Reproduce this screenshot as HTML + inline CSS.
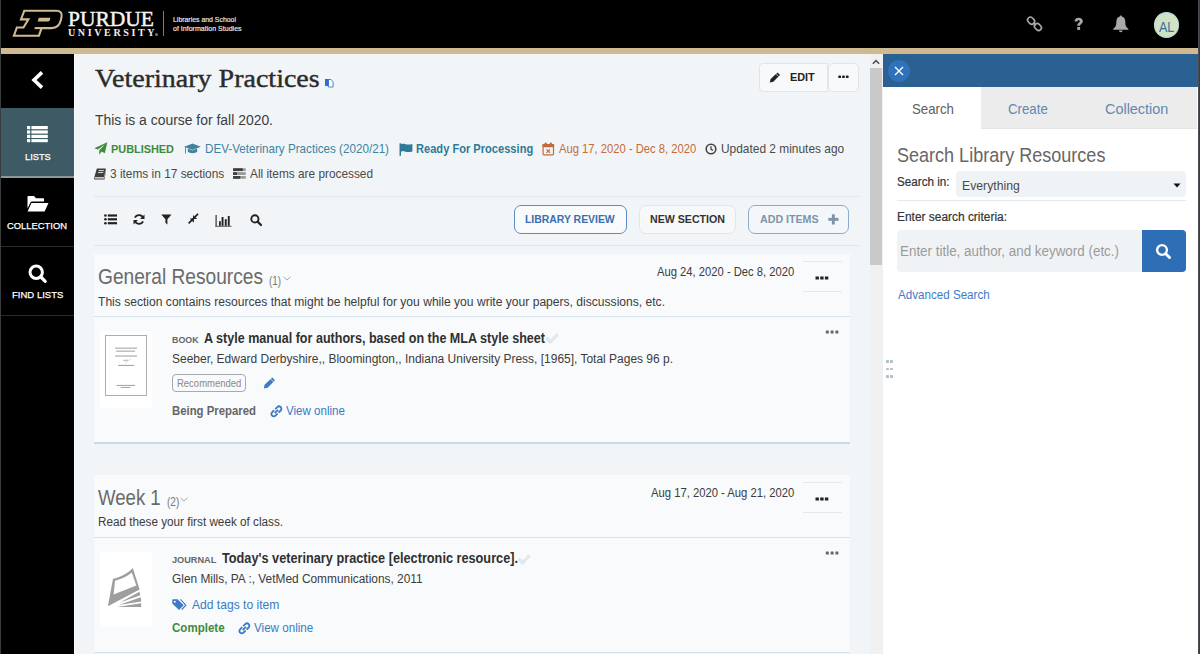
<!DOCTYPE html>
<html><head><meta charset="utf-8"><title>Veterinary Practices</title>
<style>
html,body{margin:0;padding:0;width:1200px;height:654px;overflow:hidden;background:#000;}
body{position:relative;font-family:'Liberation Sans', sans-serif;}
.t{position:absolute;white-space:nowrap;line-height:1;transform-origin:0 0;}
.r{position:absolute;box-sizing:border-box;}
svg{position:absolute;overflow:visible;}
</style></head><body>
<!-- header -->
<div class="r" style="left:0;top:0;width:1200px;height:48px;background:#000"></div>
<div class="r" style="left:0;top:48px;width:1200px;height:6px;background:#cfb991"></div>
<!-- P logo -->
<svg style="left:0;top:0" width="80" height="48" viewBox="0 0 80 48">
  <path d="M24.3,10.7 L56.3,10.7 C60.6,10.7 62.3,13.3 61.5,17 L60.8,20.3 C59.6,25.6 56.5,28.1 51.5,28.1 L41.6,28.1 L38.9,35.7 L13.9,35.7 L16.9,27.5 L23.5,27.5 L28.4,19.4 L21,19.4 Z" fill="#000" stroke="#cfb991" stroke-width="2.1" stroke-linejoin="miter"/>
  <path d="M34.6,28.1 L42,28.1" stroke="#cfb991" stroke-width="2.1"/>
  <path d="M38.9,17.7 L49.2,17.7 C50.2,17.7 50.4,18.4 50.2,19.1 C49.9,20.7 49.2,21.5 48,21.5 L37.6,21.5 Z" fill="#cfb991"/>
</svg>
<!-- registered mark -->
<div class="r" style="left:155px;top:33px;width:3px;height:3px;border-radius:50%;background:#777"></div>
<div class="r" style="left:163.2px;top:10.5px;width:1px;height:25.4px;background:#7a7a7a"></div>
<!-- header icons -->
<svg style="left:1026px;top:15px" width="18" height="18" viewBox="0 0 18 18">
  <g fill="none" stroke="#a9a9a9" stroke-width="1.6">
    <rect x="2.3" y="1.9" width="5.6" height="7.6" rx="2.8" transform="rotate(-45 5.1 5.7)"/>
    <rect x="9.1" y="8.2" width="5.6" height="7.6" rx="2.8" transform="rotate(-45 11.9 12)"/>
  </g>
  <line x1="7" y1="7.6" x2="10" y2="10.2" stroke="#a9a9a9" stroke-width="1.4"/>
</svg>
<svg style="left:1073px;top:17px" width="12" height="14" viewBox="0 0 12 14">
  <path d="M1.6,4.4 C1.6,1.9 3.6,0.8 5.6,0.8 C7.9,0.8 9.8,2.1 9.8,4.2 C9.8,6.6 7.1,6.9 7.1,8.8 L4.2,8.8 C4.2,5.9 6.8,5.8 6.8,4.3 C6.8,3.6 6.3,3.2 5.6,3.2 C4.9,3.2 4.4,3.7 4.4,4.5 Z" fill="#a9a9a9"/>
  <rect x="4.2" y="10" width="2.9" height="2.9" fill="#a9a9a9"/>
</svg>
<svg style="left:1112px;top:15px" width="18" height="18" viewBox="0 0 18 18">
  <path d="M8.8,0.6 C9.5,0.6 9.8,1.2 9.8,1.6 C12.5,2.1 13.3,4.5 13.3,7.2 C13.3,10.5 14,12 16.4,13.9 L16.4,14.8 L1.2,14.8 L1.2,13.9 C3.6,12 4.3,10.5 4.3,7.2 C4.3,4.5 5.1,2.1 7.8,1.6 C7.8,1.2 8.1,0.6 8.8,0.6 Z M7,15.5 L10.6,15.5 C10.6,16.6 9.8,17.2 8.8,17.2 C7.8,17.2 7,16.6 7,15.5 Z" fill="#a9a9a9"/>
</svg>
<div class="r" style="left:1153.6px;top:11.7px;width:25.8px;height:26px;border-radius:50%;background:#d0e1c4;border:1px solid #b5dcd6"></div>

<!-- sidebar -->
<div class="r" style="left:0;top:54px;width:74px;height:600px;background:#000"></div>
<svg style="left:29px;top:70px" width="16" height="20" viewBox="0 0 16 20">
  <path d="M13,2.4 L5,10 L13,17.6" fill="none" stroke="#fff" stroke-width="3.6" stroke-linecap="butt" stroke-linejoin="miter"/>
</svg>
<div class="r" style="left:1px;top:108px;width:73px;height:68px;background:#3d5a65"></div>
<div class="r" style="left:1px;top:176px;width:73px;height:2px;background:linear-gradient(#87959a,#9a9a9a)"></div>
<svg style="left:27px;top:126px" width="21" height="17" viewBox="0 0 21 17">
  <g fill="#fff">
    <rect x="0" y="0" width="3.2" height="3.2"/><rect x="4.4" y="0" width="16.4" height="3.2"/>
    <rect x="0" y="4.4" width="3.2" height="3.2"/><rect x="4.4" y="4.4" width="16.4" height="3.2"/>
    <rect x="0" y="8.8" width="3.2" height="3.2"/><rect x="4.4" y="8.8" width="16.4" height="3.2"/>
    <rect x="0" y="13.1" width="3.2" height="3.1"/><rect x="4.4" y="13.1" width="16.4" height="3.1"/>
  </g>
</svg>
<div class="r" style="left:1px;top:246px;width:73px;height:1px;background:#2b2b2b"></div>
<div class="r" style="left:1px;top:315px;width:73px;height:1px;background:#2b2b2b"></div>
<svg style="left:26.5px;top:195.5px" width="22" height="16" viewBox="0 0 22 16">
  <path d="M0.5,1 C0.5,0.4 0.9,0 1.5,0 L7,0 L9,2.2 L16,2.2 C16.6,2.2 17,2.6 17,3.2 L17,5.5 L5,5.5 C4.2,5.5 3.7,5.9 3.4,6.5 L0.5,12.5 Z M4.4,7 L21.5,7 L17.6,15.5 L0.6,15.5 Z" fill="#fff"/>
</svg>
<svg style="left:28px;top:265px" width="20" height="20" viewBox="0 0 20 20">
  <circle cx="8.2" cy="7.3" r="6.2" fill="none" stroke="#fff" stroke-width="3"/>
  <path d="M12.9,12 L17.2,16.3" stroke="#fff" stroke-width="3.2" stroke-linecap="round"/>
</svg>

<!-- left & right frame borders -->
<div class="r" style="left:0;top:0;width:1px;height:654px;background:#3a3c3f;z-index:5"></div>
<div class="r" style="left:1198px;top:0;width:2px;height:654px;background:linear-gradient(90deg,#55595f,#303237);z-index:5"></div>

<!-- main area -->
<div class="r" style="left:74px;top:54px;width:796px;height:600px;background:#f1f5f7"></div>
<div class="r" style="left:74px;top:54px;width:1px;height:600px;background:#f9fbfc"></div>
<!-- copy icon -->
<svg style="left:324px;top:78px" width="11" height="11" viewBox="0 0 11 11">
  <rect x="1.1" y="1" width="4.6" height="6.9" fill="#2c6fc4"/>
  <path d="M4.3,1.5 L7.1,1.5 L9.1,3.9 L9.1,9 L4.3,9 Z" fill="#fff" stroke="#4f87cf" stroke-width="1"/>
  <rect x="1.1" y="1" width="3.7" height="6.9" fill="#2c6fc4"/>
</svg>
<!-- edit buttons -->
<div class="r" style="left:759px;top:63.2px;width:69px;height:28.6px;border:1px solid #e1e5e8;border-radius:4px 0 0 4px;background:#f7f9fa"></div>
<div class="r" style="left:827.5px;top:63.2px;width:31px;height:28.6px;border:1px solid #e1e5e8;border-radius:5px;background:#f7f9fa"></div>
<svg style="left:768.5px;top:71.5px" width="12" height="11" viewBox="0 0 12 11">
  <path d="M8.6,0.6 L11,3 L4.3,9.7 L0.8,10.5 L1.6,7 Z" fill="#222"/>
  <path d="M7.2,2 L9.6,4.4" stroke="#f7f9fa" stroke-width="0.8"/>
</svg>
<svg style="left:837.5px;top:74.8px" width="11" height="4" viewBox="0 0 11 4">
  <rect x="0.3" y="0.4" width="2.7" height="2.7" rx="0.6" fill="#222"/><rect x="4.1" y="0.4" width="2.7" height="2.7" rx="0.6" fill="#222"/><rect x="7.9" y="0.4" width="2.7" height="2.7" rx="0.6" fill="#222"/>
</svg>

<!-- meta icons row 1 -->
<svg style="left:93.5px;top:142px" width="14" height="13" viewBox="0 0 14 13">
  <path d="M13.3,0.3 L0.3,6.3 L4,7.6 L11,2.2 L5.2,8.5 L5.2,12.7 L7.6,9.6 L10.8,11.2 Z" fill="#3f8a3b"/>
</svg>
<svg style="left:183.5px;top:143px" width="17" height="12" viewBox="0 0 17 12">
  <path d="M8.5,0.5 L16.8,3.7 L8.5,6.9 L0.2,3.7 Z" fill="#3e84a0"/>
  <path d="M3.8,5.6 L3.8,8.8 C5.3,10.6 11.7,10.6 13.2,8.8 L13.2,5.6 L8.5,7.4 Z" fill="#3e84a0"/>
  <rect x="1.1" y="4" width="0.9" height="6.5" fill="#3e84a0"/>
</svg>
<svg style="left:398.5px;top:142.5px" width="14" height="13" viewBox="0 0 14 13">
  <rect x="0.5" y="0.3" width="1.5" height="12.5" fill="#2f7a97"/>
  <path d="M2,1.3 C5,-0.3 7.5,2.8 13.4,1 L13.4,8.4 C7.5,10.2 5,7.1 2,8.7 Z" fill="#2f7a97"/>
</svg>
<svg style="left:541.5px;top:141.5px" width="13" height="14" viewBox="0 0 13 14">
  <rect x="1.1" y="2.6" width="10.4" height="10.3" rx="0.8" fill="none" stroke="#c46a3c" stroke-width="1.2"/>
  <rect x="0.5" y="2" width="11.6" height="3.2" rx="0.6" fill="#c46a3c"/>
  <rect x="2.6" y="0.4" width="2.2" height="3" rx="1" fill="#c46a3c"/><rect x="7.8" y="0.4" width="2.2" height="3" rx="1" fill="#c46a3c"/>
  <path d="M4.5,7.3 L8.1,10.9 M8.1,7.3 L4.5,10.9" stroke="#c46a3c" stroke-width="1.2"/>
</svg>
<svg style="left:704.5px;top:142.5px" width="12" height="12" viewBox="0 0 12 12">
  <circle cx="6" cy="6" r="4.8" fill="none" stroke="#444" stroke-width="1.6"/>
  <path d="M6,3.2 L6,6.3 L8,7.3" fill="none" stroke="#444" stroke-width="1.3"/>
</svg>
<!-- meta icons row 2 -->
<svg style="left:93.5px;top:167.5px" width="13" height="13" viewBox="0 0 13 13">
  <path d="M3.3,0.6 L11.4,0.6 C11.8,0.6 12,0.9 11.9,1.3 L9.9,9.3 L1.2,9.3 C0.8,9.3 0.6,9.6 0.6,10 C0.6,10.4 0.9,10.6 1.3,10.6 L10.1,10.6 L11.7,3.6 L11.9,3.8 L10.5,11.6 L1.2,11.6 C0.3,11.6 -0.2,11 0.1,10 L2.6,1.2 C2.7,0.8 2.9,0.6 3.3,0.6 Z" fill="#3d3d3d"/>
  <path d="M4.6,2.6 L9.8,2.6 M4.1,4.6 L9.3,4.6" stroke="#f1f5f7" stroke-width="0.9"/>
</svg>
<svg style="left:232.8px;top:167.8px" width="13" height="11" viewBox="0 0 13 11">
  <g fill="#9a9a9a"><rect x="0" y="0.3" width="12.8" height="2.9" rx="0.6"/><rect x="0" y="4.1" width="12.8" height="2.9" rx="0.6"/><rect x="0" y="7.9" width="12.8" height="2.9" rx="0.6"/></g>
  <g fill="#3f3f3f"><rect x="0" y="0.3" width="9.8" height="2.9" rx="0.5"/><rect x="0" y="4.1" width="4" height="2.9" rx="0.5"/><rect x="0" y="7.9" width="7.2" height="2.9" rx="0.5"/></g>
  <rect x="0" y="3.2" width="12.8" height="0.9" fill="#f1f5f7"/><rect x="0" y="7" width="12.8" height="0.9" fill="#f1f5f7"/>
</svg>

<!-- dividers -->
<div class="r" style="left:94px;top:196px;width:765px;height:1px;background:#dfe7eb"></div>
<div class="r" style="left:94px;top:245px;width:765px;height:1px;background:#dfe7eb"></div>

<!-- toolbar icons -->
<svg style="left:103.5px;top:213.5px" width="14" height="11" viewBox="0 0 14 11">
  <g fill="#222"><circle cx="1.4" cy="1.5" r="1.3"/><circle cx="1.4" cy="5.3" r="1.3"/><circle cx="1.4" cy="9.2" r="1.3"/>
  <rect x="3.8" y="0.4" width="9.2" height="2.2"/><rect x="3.8" y="4.2" width="9.2" height="2.2"/><rect x="3.8" y="8.1" width="9.2" height="2.2"/></g>
</svg>
<svg style="left:132.5px;top:213.5px" width="12" height="11" viewBox="0 0 12 11">
  <path d="M10.3,4.2 A4.6,4.6 0 0 0 1.9,3.6" fill="none" stroke="#222" stroke-width="1.9"/>
  <path d="M1.7,6.8 A4.6,4.6 0 0 0 10.1,7.4" fill="none" stroke="#222" stroke-width="1.9"/>
  <path d="M11.5,0.5 L11.5,5 L7,5 Z" fill="#222"/><path d="M0.5,10.5 L0.5,6 L5,6 Z" fill="#222"/>
</svg>
<svg style="left:160.5px;top:213.5px" width="11" height="11" viewBox="0 0 11 11">
  <path d="M0.3,0.5 L10.5,0.5 L6.4,5.2 L6.4,10.5 L4.4,8.7 L4.4,5.2 Z" fill="#222"/>
</svg>
<svg style="left:180px;top:208px" width="24" height="22" viewBox="0 0 24 22">
  <path d="M8.6,15.3 L18,5.9" stroke="#222" stroke-width="1.7"/>
  <path d="M13,11 L13,6.9 L17.1,11 Z M13.9,10.6 L13.9,14.8 L9.7,10.6 Z" fill="#222"/>
</svg>
<svg style="left:214px;top:213px" width="19" height="15" viewBox="0 0 19 15">
  <rect x="1.5" y="2" width="1.2" height="11.8" fill="#333"/>
  <rect x="1.5" y="12.8" width="16" height="1.1" fill="#666"/>
  <g fill="#222"><rect x="5" y="8.2" width="1.8" height="4.6"/><rect x="7.6" y="4" width="1.9" height="8.8"/><rect x="10.8" y="6.2" width="1.9" height="6.6"/><rect x="13.8" y="3" width="1.9" height="9.8"/></g>
</svg>
<svg style="left:249.5px;top:213.5px" width="12" height="12" viewBox="0 0 12 12">
  <circle cx="4.9" cy="4.9" r="3.6" fill="none" stroke="#222" stroke-width="1.9"/>
  <path d="M7.6,7.6 L11,11" stroke="#222" stroke-width="2.2" stroke-linecap="round"/>
</svg>
<!-- toolbar buttons -->
<div class="r" style="left:514px;top:204.7px;width:112.5px;height:29px;border:1px solid #5b8cc8;border-radius:7px;background:#f8fafc"></div>
<div class="r" style="left:638.8px;top:204.7px;width:97.7px;height:29px;border:1px solid #e2e6e9;border-radius:7px;background:#f6f8f9"></div>
<div class="r" style="left:748.2px;top:204.7px;width:101.2px;height:29px;border:1px solid #8eaad0;border-radius:7px;background:#f4f7fa"></div>
<svg style="left:828px;top:213.5px" width="11" height="11" viewBox="0 0 11 11">
  <rect x="3.9" y="0.3" width="2.9" height="10.2" fill="#7f93a8"/><rect x="0.3" y="3.9" width="10.2" height="2.9" fill="#7f93a8"/>
</svg>

<!-- section 1 card -->
<div class="r" style="left:94px;top:254.3px;width:756px;height:189.7px;background:#f8fafb;border-bottom:2px solid #c9dae0"></div>
<svg style="left:281.5px;top:275px" width="10" height="7" viewBox="0 0 10 7">
  <path d="M1.5,1.8 L5,5 L8.5,1.8" fill="none" stroke="#aaa" stroke-width="1"/>
</svg>
<div class="r" style="left:803.3px;top:261px;width:38.4px;height:31px;border-top:1px solid #e3e9ed;border-bottom:1px solid #e3e9ed"></div>
<svg style="left:814.5px;top:275.5px" width="14" height="4" viewBox="0 0 14 4">
  <g fill="#222"><rect x="0.5" y="0.5" width="3.4" height="3"/><rect x="5.2" y="0.5" width="3.4" height="3"/><rect x="9.9" y="0.5" width="3.4" height="3"/></g>
</svg>
<div class="r" style="left:94px;top:316px;width:756px;height:1px;background:#d6e2ec"></div>
<!-- thumb 1 -->
<div class="r" style="left:100px;top:330.7px;width:52px;height:77.3px;background:#fff"></div>
<div class="r" style="left:104.7px;top:335.3px;width:42.3px;height:60.4px;border:1px solid #adadad;background:#fff"></div>
<svg style="left:104.7px;top:335.3px" width="42" height="61" viewBox="0 0 42 61">
  <g fill="#a6a6a6">
    <rect x="10.1" y="12.6" width="22" height="1.1"/><rect x="11.1" y="15.6" width="19" height="1.1"/>
    <rect x="10.1" y="20.5" width="22" height="1.1"/><rect x="18.3" y="24.8" width="5" height="0.9"/>
    <rect x="13.2" y="29.9" width="15.8" height="1.1"/><rect x="11.6" y="49.9" width="18.4" height="1.1"/><rect x="15.7" y="52" width="9.7" height="1"/>
  </g>
  <path d="M20,28.5 C22,26.5 24,25 26,24" fill="none" stroke="#c8c8c8" stroke-width="0.6"/>
</svg>
<svg style="left:546px;top:333px" width="12" height="11" viewBox="0 0 12 11">
  <path d="M1.5,5.8 L4.6,8.9 L10.8,2.3" fill="none" stroke="#d9dee2" stroke-width="2.8" stroke-linejoin="round" stroke-linecap="round"/><path d="M1.5,5.8 L4.6,8.9 L10.8,2.3" fill="none" stroke="#f8fafb" stroke-width="1" stroke-linejoin="round" stroke-linecap="round"/>
</svg>
<svg style="left:824.5px;top:330px" width="15" height="4" viewBox="0 0 15 4">
  <g fill="#666"><rect x="0.8" y="0.6" width="3" height="2.8" rx="0.5"/><rect x="5.6" y="0.6" width="3" height="2.8" rx="0.5"/><rect x="10.4" y="0.6" width="3" height="2.8" rx="0.5"/></g>
</svg>
<div class="r" style="left:171.7px;top:374.3px;width:74.5px;height:17.4px;border:1px solid #a9a9a9;border-radius:4px"></div>
<svg style="left:262.8px;top:377px" width="13" height="12" viewBox="0 0 13 12">
  <path d="M9.3,0.6 L12,3.3 L4.6,10.7 L0.8,11.5 L1.6,7.7 Z" fill="#3b7ac4"/>
  <path d="M7.8,2.1 L10.5,4.8" stroke="#f7f9fa" stroke-width="0.8"/>
</svg>
<svg style="left:269.5px;top:405px" width="13" height="13" viewBox="0 0 13 13">
  <g fill="none" stroke="#3b7ac4" stroke-width="1.8">
    <path d="M5.2,4.2 L7.3,2.1 A2.2,2.2 0 0 1 10.7,5.5 L8.6,7.6"/>
    <path d="M7.6,8.6 L5.5,10.7 A2.2,2.2 0 0 1 2.1,7.3 L4.2,5.2"/>
    <path d="M4.8,8 L8,4.8"/>
  </g>
</svg>

<!-- section 2 card -->
<div class="r" style="left:94px;top:475px;width:756px;height:178px;background:#f8fafb;border-bottom:1px solid #d6e2ec"></div>
<svg style="left:179px;top:495.8px" width="10" height="7" viewBox="0 0 10 7">
  <path d="M1.5,1.8 L5,5 L8.5,1.8" fill="none" stroke="#aaa" stroke-width="1"/>
</svg>
<div class="r" style="left:803.3px;top:482.3px;width:38.4px;height:31px;border-top:1px solid #e3e9ed;border-bottom:1px solid #e3e9ed"></div>
<svg style="left:814.5px;top:496.8px" width="14" height="4" viewBox="0 0 14 4">
  <g fill="#222"><rect x="0.5" y="0.5" width="3.4" height="3"/><rect x="5.2" y="0.5" width="3.4" height="3"/><rect x="9.9" y="0.5" width="3.4" height="3"/></g>
</svg>
<div class="r" style="left:94px;top:537px;width:756px;height:1px;background:#d6e2ec"></div>
<!-- thumb 2 -->
<div class="r" style="left:100px;top:551.5px;width:52px;height:75.5px;background:#fff"></div>
<svg style="left:100px;top:551.5px" width="52" height="76" viewBox="0 0 52 76">
  <path d="M7.9,54.3 L13,26.8 C20,25.3 27.5,21.8 32.8,16 L39.6,37.6 Z M15,28.7 L13.6,42.6 L36.3,33.6 L31.8,20.6 C27,24.6 21.5,27.2 15,28.7 Z" fill="#9e9e9e" fill-rule="evenodd"/>
  <path d="M20,50.6 L39.4,39.8 L40.3,43.2 Z M18.8,53 L40.8,45.2 L41.2,49.6 Z M17,55 L41.2,51.2 L41.2,55.1 Z" fill="#9e9e9e"/>
</svg>
<svg style="left:518px;top:553.5px" width="14" height="11" viewBox="0 0 14 11">
  <path d="M1.5,5.8 L4.6,8.9 L10.8,2.3" fill="none" stroke="#d9dee2" stroke-width="2.8" stroke-linejoin="round" stroke-linecap="round"/><path d="M1.5,5.8 L4.6,8.9 L10.8,2.3" fill="none" stroke="#f8fafb" stroke-width="1" stroke-linejoin="round" stroke-linecap="round"/>
</svg>
<svg style="left:824.5px;top:551px" width="15" height="4" viewBox="0 0 15 4">
  <g fill="#666"><rect x="0.8" y="0.6" width="3" height="2.8" rx="0.5"/><rect x="5.6" y="0.6" width="3" height="2.8" rx="0.5"/><rect x="10.4" y="0.6" width="3" height="2.8" rx="0.5"/></g>
</svg>
<svg style="left:171.5px;top:598.5px" width="15" height="12" viewBox="0 0 15 12">
  <path d="M0.3,1.3 C0.3,0.7 0.7,0.3 1.3,0.3 L5.6,0.3 L11.6,6.3 L7,10.9 L0.3,4.6 Z" fill="#3b7ac4"/>
  <path d="M7.8,0.3 L9,0.3 L14.6,6.2 L10.1,10.9 L9.3,10.1 L13,6.3 Z" fill="#3b7ac4"/>
  <circle cx="2.8" cy="2.8" r="1" fill="#f7f9fa"/>
</svg>
<svg style="left:237.8px;top:622px" width="13" height="13" viewBox="0 0 13 13">
  <g fill="none" stroke="#3b7ac4" stroke-width="1.8">
    <path d="M5.2,4.2 L7.3,2.1 A2.2,2.2 0 0 1 10.7,5.5 L8.6,7.6"/>
    <path d="M7.6,8.6 L5.5,10.7 A2.2,2.2 0 0 1 2.1,7.3 L4.2,5.2"/>
    <path d="M4.8,8 L8,4.8"/>
  </g>
</svg>

<!-- scrollbar -->
<div class="r" style="left:870px;top:54px;width:12.6px;height:600px;background:#f0f0f0"></div>
<div class="r" style="left:870px;top:67.8px;width:12px;height:197px;background:#c9c9c9"></div>
<svg style="left:871px;top:58px" width="10" height="8" viewBox="0 0 10 8">
  <path d="M1.8,5.8 L5,2.6 L8.2,5.8" fill="none" stroke="#505050" stroke-width="1.5"/>
</svg>

<!-- right panel -->
<div class="r" style="left:882.6px;top:54px;width:315.4px;height:600px;background:#fff"></div>
<div class="r" style="left:882.6px;top:54px;width:315.4px;height:33px;background:#2a6092"></div>
<div class="r" style="left:887.5px;top:59.5px;width:22px;height:22px;border-radius:50%;background:#2d72ba"></div>
<svg style="left:893.5px;top:65.5px" width="10" height="10" viewBox="0 0 10 10">
  <path d="M1,1 L9,9 M9,1 L1,9" stroke="#fff" stroke-width="1.4"/>
</svg>
<div class="r" style="left:981px;top:87px;width:216px;height:42px;background:#ececec;border-bottom:1px solid #e4e4e4"></div>
<div class="r" style="left:956.3px;top:171.2px;width:229.4px;height:25.5px;background:#f0f3f5;border-radius:4px"></div>
<svg style="left:1172.5px;top:182.5px" width="8" height="5" viewBox="0 0 8 5">
  <path d="M0.5,0.5 L7.5,0.5 L4,4.5 Z" fill="#111"/>
</svg>
<div class="r" style="left:897px;top:199.5px;width:289px;height:1px;background:#e4e9ec"></div>
<div class="r" style="left:897px;top:229.7px;width:289px;height:42.8px;background:#f0f3f5;border-radius:4px"></div>
<div class="r" style="left:1142px;top:229.7px;width:44px;height:42.8px;background:#2e6eb6;border-radius:0 4px 4px 0"></div>
<svg style="left:1154.5px;top:242.5px" width="17" height="17" viewBox="0 0 17 17">
  <circle cx="7" cy="7" r="4.9" fill="none" stroke="#fff" stroke-width="2.4"/>
  <path d="M10.5,10.5 L14.5,14.5" stroke="#fff" stroke-width="2.9" stroke-linecap="round"/>
</svg>
<g></g>
<div class="r" style="left:886.2px;top:360.0px;width:2.5px;height:2.5px;border-radius:0.6px;background:#b0c2ca"></div>
<div class="r" style="left:890.2px;top:360.0px;width:2.5px;height:2.5px;border-radius:0.6px;background:#b0c2ca"></div>
<div class="r" style="left:886.2px;top:367.9px;width:2.5px;height:2.5px;border-radius:0.6px;background:#b0c2ca"></div>
<div class="r" style="left:890.2px;top:367.9px;width:2.5px;height:2.5px;border-radius:0.6px;background:#b0c2ca"></div>
<div class="r" style="left:886.2px;top:375.1px;width:2.5px;height:2.5px;border-radius:0.6px;background:#b0c2ca"></div>
<div class="r" style="left:890.2px;top:375.1px;width:2.5px;height:2.5px;border-radius:0.6px;background:#b0c2ca"></div>

<div class="t" style="left:67.60px;top:8.60px;font-family:'Liberation Serif', serif;font-size:21.6px;font-weight:400;color:#f4f4f4;letter-spacing:0px;transform:scaleX(0.9955);-webkit-text-stroke:0.45px #f4f4f4;">PURDUE</div>
<div class="t" style="left:67.80px;top:28.00px;font-family:'Liberation Serif', serif;font-size:10.2px;font-weight:700;color:#f0f0f0;letter-spacing:2.6px;transform:scaleX(0.9910);">UNIVERSITY</div>
<div class="t" style="left:172.70px;top:16.10px;font-family:'Liberation Sans', sans-serif;font-size:8px;font-weight:400;color:#f0f0f0;letter-spacing:0px;transform:scaleX(0.8638);-webkit-text-stroke:0.15px #f0f0f0;">Libraries and School</div>
<div class="t" style="left:172.70px;top:25.10px;font-family:'Liberation Sans', sans-serif;font-size:8px;font-weight:400;color:#f0f0f0;letter-spacing:0px;transform:scaleX(0.8814);-webkit-text-stroke:0.15px #f0f0f0;">of Information Studies</div>
<div class="t" style="left:1158.70px;top:19.60px;font-family:'Liberation Sans', sans-serif;font-size:14.5px;font-weight:400;color:#3b6da3;letter-spacing:0px;transform:scaleX(0.8620);">AL</div>
<div class="t" style="left:24.50px;top:152.20px;font-family:'Liberation Sans', sans-serif;font-size:9.8px;font-weight:400;color:#fff;letter-spacing:0px;transform:scaleX(0.9437);-webkit-text-stroke:0.25px #fff;">LISTS</div>
<div class="t" style="left:7.30px;top:221.40px;font-family:'Liberation Sans', sans-serif;font-size:9.8px;font-weight:400;color:#fff;letter-spacing:0px;transform:scaleX(0.9583);-webkit-text-stroke:0.25px #fff;">COLLECTION</div>
<div class="t" style="left:11.70px;top:290.20px;font-family:'Liberation Sans', sans-serif;font-size:9.8px;font-weight:400;color:#fff;letter-spacing:0px;transform:scaleX(0.9733);-webkit-text-stroke:0.25px #fff;">FIND LISTS</div>
<div class="t" style="left:94.70px;top:66.00px;font-family:'Liberation Serif', serif;font-size:25.5px;font-weight:400;color:#2b2b2b;letter-spacing:0px;transform:scaleX(1.0981);-webkit-text-stroke:0.4px #2b2b2b;">Veterinary Practices</div>
<div class="t" style="left:790.00px;top:72.25px;font-family:'Liberation Sans', sans-serif;font-size:11.5px;font-weight:700;color:#222;letter-spacing:0px;transform:scaleX(0.9445);">EDIT</div>
<div class="t" style="left:94.70px;top:112.40px;font-family:'Liberation Sans', sans-serif;font-size:15.3px;font-weight:400;color:#3c3c3c;letter-spacing:0px;transform:scaleX(0.9102);">This is a course for fall 2020.</div>
<div class="t" style="left:110.80px;top:143.00px;font-family:'Liberation Sans', sans-serif;font-size:11.6px;font-weight:700;color:#3f8a3b;letter-spacing:0px;transform:scaleX(0.9403);">PUBLISHED</div>
<div class="t" style="left:205.00px;top:143.00px;font-family:'Liberation Sans', sans-serif;font-size:12.2px;font-weight:400;color:#3e84a0;letter-spacing:0px;transform:scaleX(0.9564);">DEV-Veterinary Practices (2020/21)</div>
<div class="t" style="left:415.80px;top:143.00px;font-family:'Liberation Sans', sans-serif;font-size:12.2px;font-weight:700;color:#2f7a97;letter-spacing:0px;transform:scaleX(0.9106);">Ready For Processing</div>
<div class="t" style="left:558.70px;top:143.00px;font-family:'Liberation Sans', sans-serif;font-size:12.2px;font-weight:400;color:#c46a3c;letter-spacing:0px;transform:scaleX(0.9210);">Aug 17, 2020 - Dec 8, 2020</div>
<div class="t" style="left:720.80px;top:143.00px;font-family:'Liberation Sans', sans-serif;font-size:12.2px;font-weight:400;color:#4a4a4a;letter-spacing:0px;transform:scaleX(0.9775);">Updated 2 minutes ago</div>
<div class="t" style="left:109.50px;top:168.25px;font-family:'Liberation Sans', sans-serif;font-size:12.2px;font-weight:400;color:#4a4a4a;letter-spacing:0px;transform:scaleX(0.9748);">3 items in 17 sections</div>
<div class="t" style="left:249.50px;top:168.25px;font-family:'Liberation Sans', sans-serif;font-size:12.2px;font-weight:400;color:#4a4a4a;letter-spacing:0px;transform:scaleX(0.9710);">All items are processed</div>
<div class="t" style="left:525.30px;top:213.40px;font-family:'Liberation Sans', sans-serif;font-size:11.6px;font-weight:700;color:#3a6fb0;letter-spacing:0px;transform:scaleX(0.8984);">LIBRARY REVIEW</div>
<div class="t" style="left:650.00px;top:213.40px;font-family:'Liberation Sans', sans-serif;font-size:11.6px;font-weight:700;color:#333;letter-spacing:0px;transform:scaleX(0.9167);">NEW SECTION</div>
<div class="t" style="left:759.60px;top:213.40px;font-family:'Liberation Sans', sans-serif;font-size:11.6px;font-weight:700;color:#7f93a8;letter-spacing:0px;transform:scaleX(0.9190);">ADD ITEMS</div>
<div class="t" style="left:98.30px;top:267.30px;font-family:'Liberation Sans', sans-serif;font-size:21.5px;font-weight:400;color:#6a6a6a;letter-spacing:0px;transform:scaleX(0.8908);">General Resources</div>
<div class="t" style="left:269.00px;top:274.80px;font-family:'Liberation Sans', sans-serif;font-size:12px;font-weight:400;color:#777;letter-spacing:0px;transform:scaleX(0.8179);">(1)</div>
<div class="t" style="left:656.70px;top:266.00px;font-family:'Liberation Sans', sans-serif;font-size:12.2px;font-weight:400;color:#3c3c3c;letter-spacing:0px;transform:scaleX(0.9210);">Aug 24, 2020 - Dec 8, 2020</div>
<div class="t" style="left:98.30px;top:295.70px;font-family:'Liberation Sans', sans-serif;font-size:12.3px;font-weight:400;color:#3c3c3c;letter-spacing:0px;transform:scaleX(0.9829);">This section contains resources that might be helpful for you while you write your papers, discussions, etc.</div>
<div class="t" style="left:171.70px;top:334.70px;font-family:'Liberation Sans', sans-serif;font-size:9.5px;font-weight:700;color:#666;letter-spacing:0px;transform:scaleX(0.9333);">BOOK</div>
<div class="t" style="left:204.00px;top:330.70px;font-family:'Liberation Sans', sans-serif;font-size:14.3px;font-weight:700;color:#303030;letter-spacing:0px;transform:scaleX(0.8784);">A style manual for authors, based on the MLA style sheet</div>
<div class="t" style="left:171.70px;top:353.30px;font-family:'Liberation Sans', sans-serif;font-size:12.3px;font-weight:400;color:#3c3c3c;letter-spacing:0px;transform:scaleX(0.9738);">Seeber, Edward Derbyshire,, Bloomington,, Indiana University Press, [1965], Total Pages 96 p.</div>
<div class="t" style="left:176.70px;top:378.50px;font-family:'Liberation Sans', sans-serif;font-size:10px;font-weight:400;color:#888;letter-spacing:0px;transform:scaleX(0.9482);">Recommended</div>
<div class="t" style="left:171.70px;top:405.00px;font-family:'Liberation Sans', sans-serif;font-size:12.2px;font-weight:700;color:#666;letter-spacing:0px;transform:scaleX(0.9324);">Being Prepared</div>
<div class="t" style="left:286.00px;top:405.00px;font-family:'Liberation Sans', sans-serif;font-size:12.2px;font-weight:400;color:#3b7ac4;letter-spacing:0px;transform:scaleX(0.9497);">View online</div>
<div class="t" style="left:98.30px;top:488.00px;font-family:'Liberation Sans', sans-serif;font-size:21.5px;font-weight:400;color:#6a6a6a;letter-spacing:0px;transform:scaleX(0.8648);">Week 1</div>
<div class="t" style="left:166.70px;top:495.50px;font-family:'Liberation Sans', sans-serif;font-size:12px;font-weight:400;color:#777;letter-spacing:0px;transform:scaleX(0.8383);">(2)</div>
<div class="t" style="left:650.70px;top:487.30px;font-family:'Liberation Sans', sans-serif;font-size:12.2px;font-weight:400;color:#3c3c3c;letter-spacing:0px;transform:scaleX(0.9234);">Aug 17, 2020 - Aug 21, 2020</div>
<div class="t" style="left:98.30px;top:515.70px;font-family:'Liberation Sans', sans-serif;font-size:12.3px;font-weight:400;color:#3c3c3c;letter-spacing:0px;transform:scaleX(0.9531);">Read these your first week of class.</div>
<div class="t" style="left:171.70px;top:555.30px;font-family:'Liberation Sans', sans-serif;font-size:9.5px;font-weight:700;color:#666;letter-spacing:0px;transform:scaleX(0.9647);">JOURNAL</div>
<div class="t" style="left:221.70px;top:551.30px;font-family:'Liberation Sans', sans-serif;font-size:14.3px;font-weight:700;color:#303030;letter-spacing:0px;transform:scaleX(0.8891);">Today&#x27;s veterinary practice [electronic resource].</div>
<div class="t" style="left:171.70px;top:573.30px;font-family:'Liberation Sans', sans-serif;font-size:12.3px;font-weight:400;color:#3c3c3c;letter-spacing:0px;transform:scaleX(0.9666);">Glen Mills, PA :, VetMed Communications, 2011</div>
<div class="t" style="left:191.70px;top:599.00px;font-family:'Liberation Sans', sans-serif;font-size:12.2px;font-weight:400;color:#3b7ac4;letter-spacing:0px;transform:scaleX(0.9912);">Add tags to item</div>
<div class="t" style="left:171.70px;top:622.30px;font-family:'Liberation Sans', sans-serif;font-size:12.2px;font-weight:700;color:#3f8a3b;letter-spacing:0px;transform:scaleX(0.9472);">Complete</div>
<div class="t" style="left:254.00px;top:622.30px;font-family:'Liberation Sans', sans-serif;font-size:12.2px;font-weight:400;color:#3b7ac4;letter-spacing:0px;transform:scaleX(0.9545);">View online</div>
<div class="t" style="left:911.60px;top:101.60px;font-family:'Liberation Sans', sans-serif;font-size:14.5px;font-weight:400;color:#606060;letter-spacing:0px;transform:scaleX(0.9140);">Search</div>
<div class="t" style="left:1008.40px;top:101.50px;font-family:'Liberation Sans', sans-serif;font-size:14.5px;font-weight:400;color:#6188b0;letter-spacing:0px;transform:scaleX(0.9143);">Create</div>
<div class="t" style="left:1104.70px;top:101.50px;font-family:'Liberation Sans', sans-serif;font-size:14.5px;font-weight:400;color:#6188b0;letter-spacing:0px;transform:scaleX(0.9942);">Collection</div>
<div class="t" style="left:897.10px;top:146.10px;font-family:'Liberation Sans', sans-serif;font-size:19.3px;font-weight:400;color:#666;letter-spacing:0px;transform:scaleX(0.9349);">Search Library Resources</div>
<div class="t" style="left:897.00px;top:176.30px;font-family:'Liberation Sans', sans-serif;font-size:12.5px;font-weight:400;color:#333;letter-spacing:0px;transform:scaleX(0.9328);-webkit-text-stroke:0.2px #333;">Search in:</div>
<div class="t" style="left:962.30px;top:179.90px;font-family:'Liberation Sans', sans-serif;font-size:12.5px;font-weight:400;color:#4a4a4a;letter-spacing:0px;transform:scaleX(0.9786);">Everything</div>
<div class="t" style="left:897.00px;top:211.10px;font-family:'Liberation Sans', sans-serif;font-size:12.5px;font-weight:400;color:#333;letter-spacing:0px;transform:scaleX(0.9538);-webkit-text-stroke:0.2px #333;">Enter search criteria:</div>
<div class="t" style="left:900.00px;top:244.20px;font-family:'Liberation Sans', sans-serif;font-size:14px;font-weight:400;color:#9a9a9a;letter-spacing:0px;transform:scaleX(0.9572);">Enter title, author, and keyword (etc.)</div>
<div class="t" style="left:897.50px;top:288.50px;font-family:'Liberation Sans', sans-serif;font-size:12.5px;font-weight:400;color:#3d7cc9;letter-spacing:0px;transform:scaleX(0.9292);">Advanced Search</div>
</body></html>
